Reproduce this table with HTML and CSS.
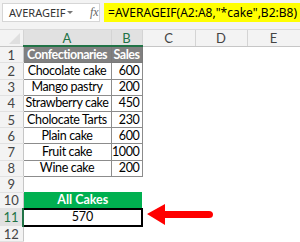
FILE: index.html
```html
<!DOCTYPE html>
<html>
<head>
  <title>AVERAGEIF - Cakes</title>
  <link rel="stylesheet" href="styles.css">
</head>
<body>

  <div class="toolbar">
    <div class="namebox">
      <span class="name">AVERAGEIF</span>
      <span class="drop"></span>
      <span class="fx">fx</span>
    </div>
    <div class="formula"><span class="mark">=AVERAGEIF(A2:A8,"*cake",B2:B8)</span></div>
  </div>

  <div class="grid-wrap">
    <table class="sheet">
      <colgroup>
        <col class="c-num">
        <col class="c-a">
        <col class="c-b">
        <col class="c-c">
        <col class="c-d">
        <col class="c-e">
      </colgroup>
      <thead>
        <tr>
          <th class="corner"><span class="tri"></span></th>
          <th class="col sel">A</th>
          <th class="col sel">B</th>
          <th class="col">C</th>
          <th class="col">D</th>
          <th class="col">E</th>
        </tr>
      </thead>
      <tbody id="sheetBody"></tbody>
    </table>

    <svg class="arrow" width="70" height="24" viewBox="0 0 70 24">
      <path d="M1 11 L19 1 L19 8 L63 8 Q67 8 67 11.5 Q67 15 63 15 L19 15 L19 22 Z" fill="#ff0000"/>
    </svg>
  </div>

  <script>
    const cakes = [
      ["Chocolate cake", 600],
      ["Mango pastry", 200],
      ["Strawberry cake", 450],
      ["Cholocate Tarts", 230],
      ["Plain cake", 600],
      ["Fruit cake", 1000],
      ["Wine cake", 200]
    ];

    function blanks(n) {
      return "<td></td>".repeat(n);
    }

    function renderSheet() {
      const body = document.getElementById("sheetBody");
      let html = `<tr><th class="row">1</th><td class="head">Confectionaries</td><td class="head">Sales</td>${blanks(3)}</tr>`;

      cakes.forEach((item, i) => {
        html += `<tr><th class="row">${i + 2}</th><td class="cell name-cell">${item[0]}</td><td class="cell num">${item[1]}</td>${blanks(3)}</tr>`;
      });

      // average of every item whose name ends in "cake"
      const matched = cakes.filter(c => c[0].toLowerCase().endsWith("cake"));
      const avg = matched.reduce((s, c) => s + c[1], 0) / matched.length;

      html += `<tr><th class="row">9</th>${blanks(5)}</tr>`;
      html += `<tr><th class="row">10</th><td class="total-head" colspan="2">All Cakes</td>${blanks(3)}</tr>`;
      html += `<tr><th class="row sel">11</th><td class="total" colspan="2">${Math.round(avg)}</td>${blanks(3)}</tr>`;
      html += `<tr><th class="row">12</th>${blanks(5)}</tr>`;

      body.innerHTML = html;
    }

    renderSheet();
  </script>

</body>
</html>
```

FILE: styles.css
```css
body {
  margin: 0;
  background: #fff;
  font-family: Lato, "Open Sans", sans-serif;
  width: 300px;
  height: 242px;
  overflow: hidden;
}

.toolbar {
  display: flex;
  align-items: center;
  height: 30px;
  padding: 0 0 0 2px;
  background: #f3f3f3;
  box-sizing: border-box;
  border-bottom: 1px solid #dadada;
}

.namebox {
  display: flex;
  align-items: center;
  width: 100px;
  height: 19px;
  margin-top: -4px;
  background: #fff;
  border: 1px solid #d6d6d6;
  box-sizing: border-box;
  font-family: "Noto Sans", sans-serif;
  font-size: 11px;
  color: #333;
}

.name {
  padding-left: 6px;
  width: 54px;
}

.drop {
  width: 0;
  height: 0;
  margin-left: 4px;
  border-left: 3px solid transparent;
  border-right: 3px solid transparent;
  border-top: 3px solid #777;
}

.fx {
  margin-left: 17px;
  font-family: "Liberation Serif", serif;
  font-style: italic;
  font-size: 12px;
  color: #666;
}

.formula {
  flex: 1;
  height: 19px;
  margin-top: -4px;
  margin-left: 4px;
  background: #fff;
  display: flex;
  align-items: center;
  font-family: "Noto Sans", sans-serif;
  font-size: 12px;
  color: #000;
}

.mark {
  background: #ffff00;
  padding: 1px 3px 1px 4px;
  line-height: 17px;
}

.grid-wrap {
  position: relative;
}

.sheet {
  border-collapse: collapse;
  table-layout: fixed;
  width: 300px;
  font-size: 12.5px;
}

.c-num { width: 23px; }
.c-a { width: 88px; }
.c-b { width: 31px; }
.c-c { width: 53px; }
.c-d { width: 52px; }
.c-e { width: 53px; }

th, td {
  height: 15.2px;
  padding: 0;
  line-height: 14px;
  white-space: nowrap;
  overflow: hidden;
}

.corner {
  background: #f3f3f3;
  border-right: 1px solid #d4d4d4;
  border-bottom: 1px solid #c6c6c6;
  position: relative;
}

.tri {
  position: absolute;
  right: 3px;
  bottom: 2px;
  width: 0;
  height: 0;
  border-left: 11px solid transparent;
  border-bottom: 11px solid #dfdfdf;
}

.col {
  background: #f3f3f3;
  font-weight: normal;
  font-size: 13px;
  color: #444;
  border-right: 1px solid #d4d4d4;
  border-bottom: 1px solid #c6c6c6;
}

.col.sel {
  background: #e1e1e1;
  color: #217346;
  border-bottom: 2px solid #217346;
}

.row {
  background: #f3f3f3;
  font-weight: normal;
  font-size: 13px;
  color: #444;
  border-right: 1px solid #c6c6c6;
  border-bottom: 1px solid #e1e1e1;
}

.row.sel {
  background: #e1e1e1;
  color: #217346;
  border-right: 2px solid #217346;
}

.head {
  background: #808080;
  color: #fff;
  font-weight: bold;
  letter-spacing: -0.5px;
  text-align: center;
  border: 1px solid #7a7a7a;
}

.cell {
  border: 1px solid #8c8c8c;
  color: #000;
  letter-spacing: -0.35px;
}

.name-cell {
  text-align: center;
}

.num {
  text-align: right;
  padding-right: 2px;
}

.total-head {
  background: #00b050;
  color: #fff;
  font-weight: bold;
  text-align: center;
}

.total {
  text-align: center;
  border: 2px solid #000;
}

.arrow {
  position: absolute;
  left: 146px;
  top: 173px;
}
```
